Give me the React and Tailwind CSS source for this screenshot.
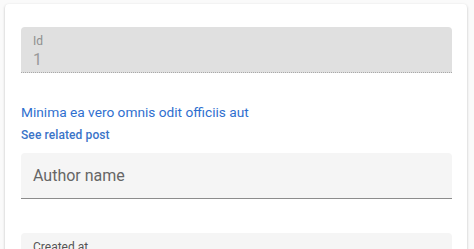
import React from 'react';

const font = { fontFamily: 'Roboto, "Noto Sans", sans-serif' };

const App = () => {
  return (
    <div className="bg-[#fafafa] pt-[4px] pl-[5px] overflow-hidden h-[249px]" style={font}>
      <div className="w-[462px] h-[260px] bg-white rounded-[4px] shadow-[0_1px_3px_rgba(0,0,0,0.2),0_1px_1px_rgba(0,0,0,0.14)] pl-[16px] pr-[15px] pt-[23px]">
        {/* Id (disabled) */}
        <div className="h-[46px] bg-[#e0e0e0] rounded-t-[4px] border-b border-dotted border-[#a8a8a8] px-[12px] pt-[7px]">
          <div className="text-[12px] leading-[14px] text-[#8f8f8f]">Id</div>
          <div className="text-[16px] leading-[20px] mt-[2px] text-[#999999]">1</div>
        </div>

        <div className="mt-[30px]">
          <a className="block text-[13.7px] leading-[18px] text-[#2f6fcf]">
            Minima ea vero omnis odit officiis aut
          </a>
          <a className="block mt-[7px] text-[12px] leading-[14px] font-medium tracking-[0.1px] text-[#3a74c8]">
            See related post
          </a>
        </div>

        {/* Author name */}
        <div className="mt-[11px] h-[46px] bg-[#f5f5f5] rounded-t-[4px] border-b border-[#8c8c8c] px-[12px] flex items-center">
          <span className="text-[16px] text-[#666666]">Author name</span>
        </div>

        {/* Created at */}
        <div className="mt-[34px] h-[46px] bg-[#f5f5f5] rounded-t-[4px] px-[12px] pt-[7px]">
          <div className="text-[12px] leading-[14px] text-[#555555]">Created at</div>
        </div>
      </div>
    </div>
  );
};

export default App;
